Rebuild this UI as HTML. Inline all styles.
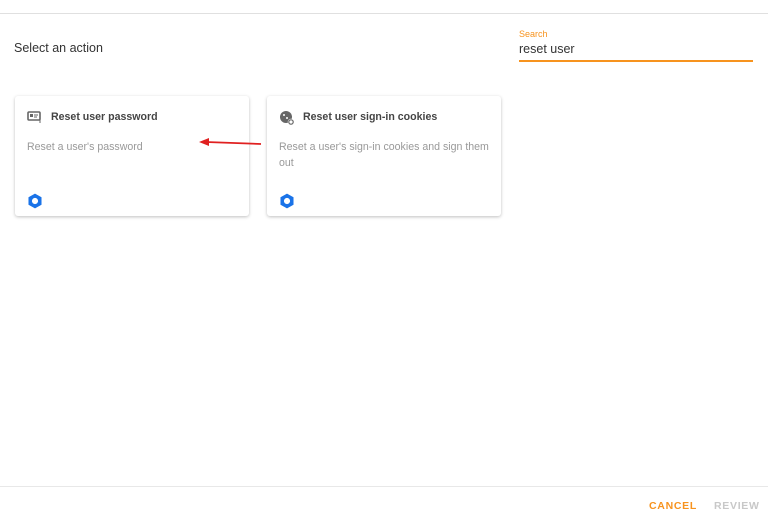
<!DOCTYPE html>
<html><head><style>
body{margin:0;width:768px;height:524px;background:#fff;font-family:"Liberation Sans",sans-serif;position:relative;overflow:hidden}
.top{position:absolute;left:0;right:0;top:13px;border-top:1px solid #e0e0e0}
.bot{position:absolute;left:0;right:0;top:486px;border-top:1px solid #e8e8e8}
.title{position:absolute;left:14px;top:41px;font-size:12.5px;color:#333}
.slab{position:absolute;left:519px;top:29px;font-size:9px;color:#f7931e}
.sval{position:absolute;left:519px;top:42px;font-size:12.5px;color:#333}
.sline{position:absolute;left:519px;top:60px;width:234px;height:2px;background:#f7931e}
.card{position:absolute;top:96px;width:234px;height:120px;background:#fff;border-radius:3px;box-shadow:0 1px 3px rgba(0,0,0,.25)}
.card h{position:absolute;left:36px;top:15px;font-size:10.6px;font-weight:bold;color:#444}
.card p{position:absolute;left:12px;top:43px;margin:0;font-size:10.6px;line-height:16px;color:#999;width:218px}
.ic{position:absolute;left:12px;top:14px}
.hex{position:absolute;left:12px;top:97px}
.btn{position:absolute;top:500px;font-size:10.5px;font-weight:bold;letter-spacing:.7px}
</style></head><body>
<div class="top"></div>
<div class="title">Select an action</div>
<div class="slab">Search</div>
<div class="sval">reset user</div>
<div class="sline"></div>
<div class="card" style="left:15px">
<svg class="ic" width="16" height="14" viewBox="0 0 16 14"><rect x="1" y="2" width="12" height="8" rx="1" fill="none" stroke="#666" stroke-width="1.6"/><rect x="3" y="4" width="3" height="3" fill="#666"/><path d="M7 5h4M7 7h3" stroke="#666"/><path d="M13 10v3" stroke="#666"/></svg>
<h>Reset user password</h>
<p>Reset a user's password</p>
<svg class="hex" width="16" height="16" viewBox="0 0 14 14"><polygon points="7,0.5 12.7,3.7 12.7,10.3 7,13.5 1.3,10.3 1.3,3.7" fill="#1a73e8"/><circle cx="7" cy="7" r="2.7" fill="#fff"/></svg>
</div>
<div class="card" style="left:267px">
<svg class="ic" width="16" height="16" viewBox="0 0 16 16"><circle cx="7" cy="7" r="6" fill="#666"/><circle cx="5" cy="5" r="1" fill="#fff"/><circle cx="8" cy="8" r="1" fill="#fff"/><circle cx="12" cy="12" r="3.2" fill="#fff"/><circle cx="12" cy="12" r="2.2" fill="none" stroke="#666" stroke-width="1.2"/></svg>
<h>Reset user sign-in cookies</h>
<p>Reset a user's sign-in cookies and sign them out</p>
<svg class="hex" width="16" height="16" viewBox="0 0 14 14"><polygon points="7,0.5 12.7,3.7 12.7,10.3 7,13.5 1.3,10.3 1.3,3.7" fill="#1a73e8"/><circle cx="7" cy="7" r="2.7" fill="#fff"/></svg>
</div>
<svg style="position:absolute;left:198px;top:137px" width="66" height="12"><line x1="8" y1="5" x2="63" y2="7" stroke="#e02020" stroke-width="1.8"/><polygon points="1,5 11,1 11,9" fill="#e02020"/></svg>
<div class="bot"></div>
<div class="btn" style="left:649px;color:#f7931e">CANCEL</div>
<div class="btn" style="left:714px;color:#c8c8c8">REVIEW</div>
</body></html>
